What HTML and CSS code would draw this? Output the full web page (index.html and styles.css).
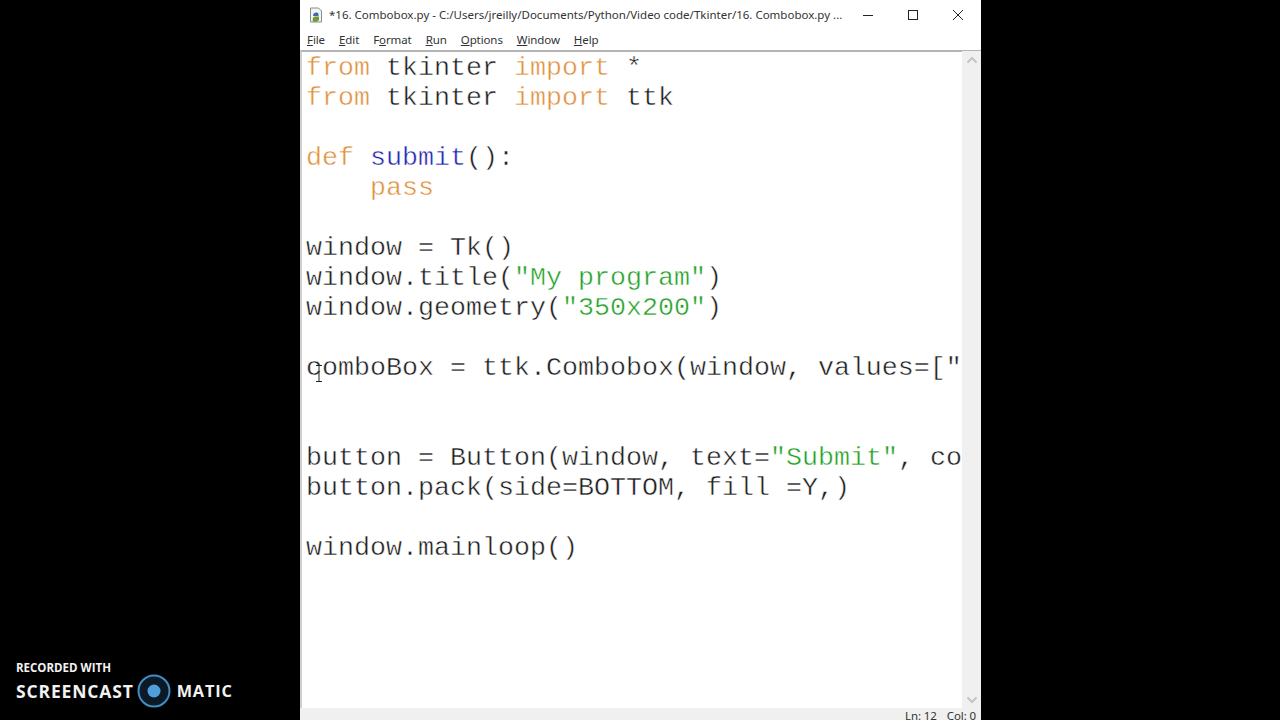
FILE: index.html
```html
<!DOCTYPE html>
<html lang="en">
<head>
<meta charset="utf-8">
<title>Combobox.py</title>
<link rel="stylesheet" href="styles.css">
</head>
<body>
<div class="stage">
  <aside class="side">
    <div class="mark">
      <div class="mark-top">RECORDED WITH</div>
      <div class="mark-row">
        <span>SCREENCAST</span>
        <svg class="mark-logo" width="34" height="34" viewBox="0 0 34 34"><circle cx="17" cy="17" r="15.500" fill="#0b1a26" stroke="#3f8fc4" stroke-width="2"/><circle cx="17" cy="17" r="6.500" fill="#4f9fdc"/></svg>
        <span class="mark-end">MATIC</span>
      </div>
    </div>
  </aside>
  <main class="window">
    <header class="titlebar">
      <svg class="app-icon" width="16" height="16" viewBox="0 0 16 16">
        <path d="M2.500 1h8l3 3v11h-11z" fill="#f4f4f4" stroke="#8a8a8a"/>
        <path d="M5 9c0-2.500 1.500-3.500 3-3.500s2.500.5 2.500 1.500v2H6.500z" fill="#3b6ea8"/>
        <path d="M5 14.500c1 .5 5 .5 6-1.500V9.500H7.500c-2 0-3.500 1.500-2.500 5z" fill="#6f9a3a"/>
      </svg>
      <div class="title">*16. Combobox.py - C:/Users/jreilly/Documents/Python/Video code/Tkinter/16. Combobox.py ...</div>
      <div class="controls">
        <svg class="ctl" width="12" height="12" viewBox="0 0 12 12"><path d="M1 6.500h10" stroke="#222" stroke-width="1"/></svg>
        <svg class="ctl" width="12" height="12" viewBox="0 0 12 12"><rect x="1.500" y="1.500" width="9" height="9" fill="none" stroke="#222"/></svg>
        <svg class="ctl" width="12" height="12" viewBox="0 0 12 12"><path d="M1 1l10 10M11 1L1 11" stroke="#222" stroke-width="1"/></svg>
      </div>
    </header>
    <nav class="menubar">
      <span class="menu"><u>F</u>ile</span>
      <span class="menu"><u>E</u>dit</span>
      <span class="menu">F<u>o</u>rmat</span>
      <span class="menu"><u>R</u>un</span>
      <span class="menu"><u>O</u>ptions</span>
      <span class="menu"><u>W</u>indow</span>
      <span class="menu"><u>H</u>elp</span>
    </nav>
    <section class="editor">
      <pre class="code"><span class="kw">from</span> tkinter <span class="kw">import</span> *
<span class="kw">from</span> tkinter <span class="kw">import</span> ttk

<span class="kw">def</span> <span class="fn">submit</span>():
    <span class="kw">pass</span>

window = Tk()
window.title(<span class="str">"My program"</span>)
window.geometry(<span class="str">"350x200"</span>)

comboBox = ttk.Combobox(window, values=["Red", "Green", "Blue"])


button = Button(window, text=<span class="str">"Submit"</span>, command=submit)
button.pack(side=BOTTOM, fill =Y,)

window.mainloop()</pre>
      <svg class="ibeam" width="8" height="17" viewBox="0 0 8 17"><path d="M1 .5h6M4 .5v16M1 16.500h6" stroke="#222" fill="none"/></svg>
      <div class="scrollbar">
        <svg width="12" height="8" viewBox="0 0 12 8"><path d="M1.500 6.500L6 2l4.500 4.500" fill="none" stroke="#c4c4c4" stroke-width="2"/></svg>
        <svg width="12" height="8" viewBox="0 0 12 8"><path d="M1.500 1.500L6 6l4.500-4.500" fill="none" stroke="#c4c4c4" stroke-width="2"/></svg>
      </div>
    </section>
    <footer class="status"><span>Ln: 12</span><span>Col: 0</span></footer>
  </main>
</div>
</body>
</html>
```
FILE: styles.css
```css
* { box-sizing: border-box; }
html, body { margin: 0; height: 100%; overflow: hidden; background: #000; }
.stage { display: flex; width: 1280px; height: 720px; background: #000; }
.side { position: relative; width: 300px; flex: none; }
.mark { position: absolute; left: 16px; top: 661px; color: #f2f2f2; font-family: "Open Sans", sans-serif; font-weight: 700; }
.mark-top { font-size: 11.500px; line-height: 14px; white-space: nowrap; }
.mark-row { display: flex; align-items: center; gap: 3px; margin-top: -1px; font-size: 17.500px; letter-spacing: .85px; height: 34px; white-space: nowrap; }
.mark-logo { flex: none; }
.mark-end { margin-left: 3px; font-size: 16.300px; }
.window { width: 681px; flex: none; height: 720px; background: #fff; display: flex; flex-direction: column; font-family: "Noto Sans", "Open Sans", sans-serif; color: #222; }
.titlebar { height: 29px; flex: none; display: flex; align-items: center; padding-left: 8px; }
.app-icon { flex: none; }
.title { margin-left: 5px; width: 513px; font-size: 11.500px; white-space: nowrap; overflow: hidden; color: #333; }
.controls { display: flex; margin-left: 20px; gap: 33px; }
.ctl { flex: none; }
.menubar { height: 21px; flex: none; display: flex; align-items: center; padding-left: 7px; gap: 14px; font-size: 11.500px; letter-spacing: -.1px; color: #333; }
.menu { white-space: nowrap; }
.editor { position: relative; flex: 1; min-height: 0; display: flex; border-top: 2px solid #b4b4b4; border-left: 2px solid #cfcfcf; }
.code { margin: 0; flex: 1; min-width: 0; overflow: hidden; padding: 1px 0 0 4px; font-family: "Liberation Mono", monospace; font-size: 26.670px; line-height: 30px; color: #1c1c1c; -webkit-text-stroke: .45px #fff; }
.kw { color: #e08f3a; }
.fn { color: #2222b0; }
.str { color: #22a022; }
.ibeam { position: absolute; left: 13px; top: 313px; }
.scrollbar { width: 19px; flex: none; background: #f0f0f0; display: flex; flex-direction: column; justify-content: space-between; align-items: center; padding: 5px 0 4px; margin-top: -1px; }
.status { height: 12px; flex: none; background: #f0f0f0; display: flex; justify-content: flex-end; gap: 10px; padding-right: 5px; font-size: 11.500px; letter-spacing: -.1px; line-height: 16px; color: #333; }
```
